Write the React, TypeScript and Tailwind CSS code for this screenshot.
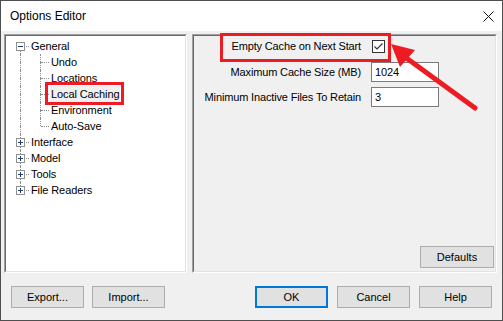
import React from 'react';

const font = { fontFamily: '"Liberation Sans", Arial, sans-serif' };

type CellProps = {
  up?: boolean;
  down?: boolean;
  right?: boolean;
  box?: 'minus' | 'plus';
};

// one 20x16 connector cell of the tree
function Cell({ up, down, right, box }: CellProps) {
  return (
    <div className="relative h-4 w-5 shrink-0">
      {up && <span className="absolute left-[10px] top-0 h-[8px] border-l border-dotted border-[#8c8c8c]" />}
      {down && <span className="absolute left-[10px] top-[8px] h-[8px] border-l border-dotted border-[#8c8c8c]" />}
      {right && <span className="absolute left-[11px] top-[8px] w-[8px] border-t border-dotted border-[#8c8c8c]" />}
      {box && (
        <span className="absolute left-[6px] top-[4px] flex h-[9px] w-[9px] items-center justify-center border border-[#919191] bg-white">
          <span className="absolute h-px w-[5px] bg-[#1f3f7a]" />
          {box === 'plus' && <span className="absolute h-[5px] w-px bg-[#1f3f7a]" />}
        </span>
      )}
    </div>
  );
}

function Label({ text, selected }: { text: string; selected?: boolean }) {
  return (
    <span
      className={`relative h-4 whitespace-nowrap px-[1px] text-[11px] leading-4 tracking-[-0.1px] text-black ${selected ? 'bg-[#f0f0f0]' : ''}`}
    >
      {text}
      {selected && <span className="absolute -left-[5px] -right-[4px] -top-[4px] -bottom-[3px] border-[3px] border-[#ed1c24]" />}
    </span>
  );
}

const children = ['Undo', 'Locations', 'Local Caching', 'Environment', 'Auto-Save'];
const roots = ['Interface', 'Model', 'Tools', 'File Readers'];

function Tree() {
  return (
    <div className="flex flex-col pl-[4px] pt-[2px]">
      <div className="flex items-center">
        <Cell down right box="minus" />
        <Label text="General" />
      </div>
      {children.map((c, i) => (
        <div key={c} className="flex items-center">
          <Cell up down />
          <Cell up down={i < children.length - 1} right />
          <Label text={c} selected={c === 'Local Caching'} />
        </div>
      ))}
      {roots.map((r, i) => (
        <div key={r} className="flex items-center">
          <Cell up down={i < roots.length - 1} right box="plus" />
          <Label text={r} />
        </div>
      ))}
    </div>
  );
}

function Btn({ children, primary, className }: { children: React.ReactNode; primary?: boolean; className?: string }) {
  return (
    <div
      className={`flex h-[22px] w-[73px] items-center justify-center bg-[#e1e1e1] text-[11px] text-black ${
        primary ? 'border-2 border-[#0078d7]' : 'border border-[#adadad]'
      } ${className ?? ''}`}
    >
      {children}
    </div>
  );
}

function Input({ value }: { value: string }) {
  return (
    <div className="flex h-[20px] w-[68px] items-center border border-[#7a7a7a] bg-white px-[3px] text-[11px] text-black">
      {value}
    </div>
  );
}

export default function App() {
  return (
    <div className="relative h-[321px] w-[503px] overflow-hidden bg-white" style={font}>
      <div className="flex h-full flex-col border border-[#4f4f4f]">
        {/* title bar */}
        <div className="flex h-[30px] shrink-0 items-center justify-between bg-white pl-[9px] pr-[8px]">
          <span className="text-[12px] text-black">Options Editor</span>
          <svg width="11" height="11" viewBox="0 0 11 11">
            <path d="M0.5 0.5 L10.5 10.5 M10.5 0.5 L0.5 10.5" stroke="#111" strokeWidth="1" />
          </svg>
        </div>

        {/* body */}
        <div className="flex flex-1 flex-col bg-[#f0f0f0]">
          <div className="ml-[3px] mt-[3px] flex h-[239px] gap-[5px]">
            {/* tree */}
            <div className="w-[183px] border border-t-[#a0a0a0] border-l-[#a0a0a0] border-b-white border-r-white">
              <div className="h-full border border-t-[#696969] border-l-[#696969] border-b-[#e3e3e3] border-r-[#e3e3e3] bg-white">
                <Tree />
              </div>
            </div>

            {/* settings */}
            <div className="w-[305px] border border-t-[#a0a0a0] border-l-[#a0a0a0] border-b-white border-r-white">
              <div className="flex h-full flex-col border border-t-[#696969] border-l-[#696969] border-b-[#e3e3e3] border-r-[#e3e3e3] text-[11px] tracking-[-0.15px] text-black">
                <div className="mt-[1px] flex h-[19px] items-center">
                  <span className="w-[167px] text-right">Empty Cache on Next Start</span>
                  <span className="ml-[11px] flex h-[13px] w-[13px] items-center justify-center border border-[#333] bg-white">
                    <svg width="11" height="11" viewBox="0 0 11 11">
                      <path d="M1.5 5.5 L4 8 L9.5 2.5" stroke="#333" strokeWidth="1.2" fill="none" />
                    </svg>
                  </span>
                </div>
                <div className="mt-[6px] flex items-center">
                  <span className="w-[167px] text-right">Maximum Cache Size (MB)</span>
                  <span className="ml-[10px]">
                    <Input value="1024" />
                  </span>
                </div>
                <div className="mt-[5px] flex items-center">
                  <span className="w-[167px] whitespace-nowrap text-right">Minimum Inactive Files To Retain</span>
                  <span className="ml-[10px]">
                    <Input value="3" />
                  </span>
                </div>
                <div className="mt-auto mb-[3px] mr-[1px] flex justify-end tracking-normal">
                  <Btn className="h-[21px] w-[74px]">Defaults</Btn>
                </div>
              </div>
            </div>
          </div>

          {/* footer buttons */}
          <div className="mt-[13px] flex px-[10px]">
            <div className="flex gap-[8px]">
              <Btn>Export...</Btn>
              <Btn>Import...</Btn>
            </div>
            <div className="ml-auto flex gap-[9px]">
              <Btn primary>OK</Btn>
              <Btn>Cancel</Btn>
              <Btn>Help</Btn>
            </div>
          </div>
        </div>
      </div>

      {/* annotation: highlight box and arrow */}
      <div className="pointer-events-none absolute left-[220px] top-[33px] h-[29px] w-[171px] border-[3px] border-[#ed1c24]" />
      <svg className="pointer-events-none absolute left-0 top-0" width="503" height="321">
        <line x1="475" y1="108" x2="405" y2="57" stroke="#ed1c24" strokeWidth="5" strokeLinecap="round" />
        <polygon points="391,44 415,50 400,67" fill="#ed1c24" />
      </svg>
    </div>
  );
}
